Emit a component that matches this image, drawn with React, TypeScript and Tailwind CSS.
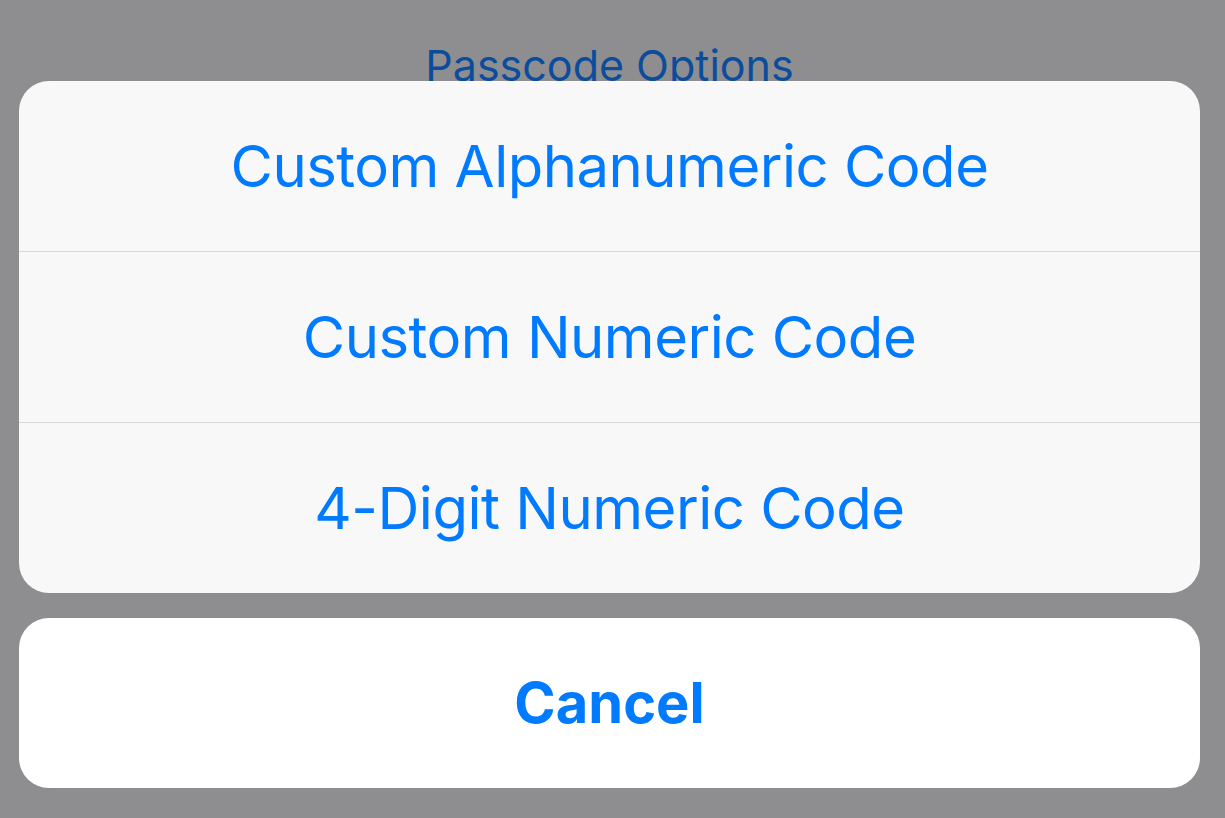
export default function App() {
  const options = ['Custom Alphanumeric Code', 'Custom Numeric Code', '4-Digit Numeric Code'];

  return (
    <div
      className="w-[1225px] h-[818px] bg-[#8e8e90] overflow-hidden flex flex-col pl-[19px] pr-[25px]"
      style={{ fontFamily: 'Inter, "Noto Sans", sans-serif' }}
    >
      {/* dimmed title, partly hidden behind the sheet */}
      <div className="h-[100px] pt-[40px] text-center shrink-0">
        <span className="text-[43px] leading-[50px] text-[#0b4d9c]">Passcode Options</span>
      </div>

      <div className="-mt-[19px] relative h-[512px] bg-[#f8f8f8] rounded-[30px] flex flex-col overflow-hidden shrink-0">
        {options.map((label, i) => (
          <div
            key={label}
            className={
              'flex-1 flex items-center justify-center text-[58px] tracking-[-0.5px] text-[#007aff] ' +
              (i > 0 ? 'border-t border-[#d8d8d8]' : '')
            }
          >
            {label}
          </div>
        ))}
      </div>

      <div className="mt-[25px] h-[170px] bg-white rounded-[30px] flex items-center justify-center shrink-0">
        <span className="text-[56px] font-bold text-[#007aff]">Cancel</span>
      </div>
    </div>
  );
}
